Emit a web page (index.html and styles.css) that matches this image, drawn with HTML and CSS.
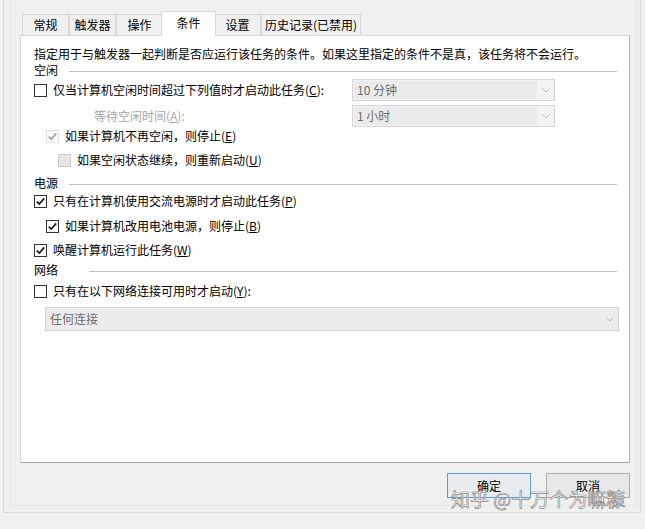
FILE: index.html
```html
<!DOCTYPE html>
<html lang="zh-CN">
<head>
  <meta charset="UTF-8" />
  <title>条件</title>
  <link rel="stylesheet" href="styles.css">
</head>
<body>

  <div class="frame">
    <div class="frame-inner">

      <div class="tabs">
        <div class="tab">常规</div>
        <div class="tab">触发器</div>
        <div class="tab">操作</div>
        <div class="tab active">条件</div>
        <div class="tab">设置</div>
        <div class="tab">历史记录(已禁用)</div>
      </div>

      <div class="panel">
        <p class="intro">指定用于与触发器一起判断是否应运行该任务的条件。如果这里指定的条件不是真，该任务将不会运行。</p>

        <!-- 空闲 -->
        <div class="group-title"><span>空闲</span><i class="rule"></i></div>
        <div class="field-row row-idle">
          <div class="field-label">
            <span class="box"></span>仅当计算机空闲时间超过下列值时才启动此任务(<u>C</u>):
          </div>
          <div class="combo">
            <span class="combo-text">10 分钟</span>
            <span class="combo-arrow"><svg width="8" height="5" viewBox="0 0 8 5"><path d="M0.5 0.5 L4 4 L7.5 0.5" fill="none" stroke="#bdbdbd" stroke-width="1"/></svg></span>
          </div>
        </div>
        <div class="field-row row-wait">
          <div class="field-label wait-label">等待空闲时间(<u>A</u>):</div>
          <div class="combo">
            <span class="combo-text">1 小时</span>
            <span class="combo-arrow"><svg width="8" height="5" viewBox="0 0 8 5"><path d="M0.5 0.5 L4 4 L7.5 0.5" fill="none" stroke="#bdbdbd" stroke-width="1"/></svg></span>
          </div>
        </div>
        <div class="opt sub row-stop">
          <span class="box disabled checked"><svg width="11" height="11" viewBox="0 0 11 11"><path d="M1.8 5.6 L4.3 8.1 L9.2 2.4" fill="none" stroke="#9c9c9c" stroke-width="1.6"/></svg></span>如果计算机不再空闲，则停止(<u>E</u>)
        </div>
        <div class="opt sub2 row-restart">
          <span class="box disabled"></span>如果空闲状态继续，则重新启动(<u>U</u>)
        </div>

        <!-- 电源 -->
        <div class="group-title title-power"><span>电源</span><i class="rule"></i></div>
        <div class="opt row-ac">
          <span class="box"><svg width="11" height="11" viewBox="0 0 11 11"><path d="M1.8 5.6 L4.3 8.1 L9.2 2.4" fill="none" stroke="#1a1a1a" stroke-width="1.7"/></svg></span>只有在计算机使用交流电源时才启动此任务(<u>P</u>)
        </div>
        <div class="opt sub row-battery">
          <span class="box"><svg width="11" height="11" viewBox="0 0 11 11"><path d="M1.8 5.6 L4.3 8.1 L9.2 2.4" fill="none" stroke="#1a1a1a" stroke-width="1.7"/></svg></span>如果计算机改用电池电源，则停止(<u>B</u>)
        </div>
        <div class="opt row-wake">
          <span class="box"><svg width="11" height="11" viewBox="0 0 11 11"><path d="M1.8 5.6 L4.3 8.1 L9.2 2.4" fill="none" stroke="#1a1a1a" stroke-width="1.7"/></svg></span>唤醒计算机运行此任务(<u>W</u>)
        </div>

        <!-- 网络 -->
        <div class="group-title title-net"><span>网络</span><i class="rule"></i></div>
        <div class="opt row-net">
          <span class="box"></span>只有在以下网络连接可用时才启动(<u>Y</u>):
        </div>
        <div class="combo combo-wide">
          <span class="combo-text">任何连接</span>
          <span class="combo-arrow"><svg width="8" height="5" viewBox="0 0 8 5"><path d="M0.5 0.5 L4 4 L7.5 0.5" fill="none" stroke="#bdbdbd" stroke-width="1"/></svg></span>
        </div>
      </div>

      <div class="buttons">
        <button class="btn default">确定</button>
        <button class="btn">取消</button>
      </div>

    </div>
  </div>

  <div class="watermark">知乎 @十万个为嘛糠</div>

</body>
</html>
```

FILE: styles.css
```css
body {
  margin: 0;
  background-color: #f0f0f0;
  font-family: "Noto Sans CJK SC", "Microsoft YaHei", sans-serif;
  font-size: 12px;
  color: #000;
  width: 645px;
  height: 529px;
  overflow: hidden;
  position: relative;
}
.frame {
  margin-left: 3px;
  width: 638px;
  height: 513px;
  box-sizing: border-box;
  border: 1px solid #dcdcdc;
  border-top: none;
  padding-left: 6px;
}
.frame-inner {
  width: 627px;
  height: 506px;
  box-sizing: border-box;
  border: 1px solid #e6e6e6;
  border-top: none;
  padding: 11px 0 0 9px;
}
.tabs {
  display: flex;
  align-items: flex-end;
  height: 25px;
  padding-left: 2px;
}
.tab {
  height: 22px;
  min-width: 47px;
  box-sizing: border-box;
  padding: 0 3px;
  border: 1px solid #d9d9d9;
  border-bottom: none;
  background-color: #f0f0f0;
  line-height: 20px;
  text-align: center;
  white-space: nowrap;
}
.tab.active {
  position: relative;
  z-index: 1;
  height: 25px;
  min-width: 55px;
  margin: 0 -2px;
  background-color: #fff;
  line-height: 21px;
}
.panel {
  position: relative;
  margin-top: -1px;
  width: 610px;
  height: 428px;
  box-sizing: border-box;
  background: #fff;
  border: 1px solid #d9d9d9;
  border-right-color: #b4b4b4;
  border-bottom-color: #a5a5a5;
  padding: 10px 12px 0 13px;
}
.intro {
  margin: 0;
  height: 16px;
  line-height: 16px;
  white-space: nowrap;
}
.group-title {
  display: flex;
  align-items: center;
  height: 16px;
  line-height: 16px;
}
.group-title .rule {
  flex: 1;
  height: 1px;
  margin-left: 11px;
  margin-top: 2px;
  background-color: #c2c2c2;
}
.title-net .rule {
  margin-left: 31px;
}
.box {
  display: inline-flex;
  align-items: center;
  justify-content: center;
  width: 13px;
  height: 13px;
  box-sizing: border-box;
  border: 1px solid #333;
  background: #fff;
  margin-right: 6px;
  flex-shrink: 0;
}
.box.disabled {
  border-color: #cccccc;
  background: #e6e6e6;
}
.box.disabled.checked {
  border-color: #e2e2e2;
  background: #fafafa;
}
.opt {
  display: flex;
  align-items: center;
  height: 16px;
  line-height: 16px;
  white-space: nowrap;
}
.opt.sub {
  padding-left: 12px;
}
.opt.sub2 {
  padding-left: 24px;
}
.field-row {
  display: flex;
  align-items: center;
  height: 22px;
}
.field-label {
  flex: 0 0 318px;
  display: flex;
  align-items: center;
  line-height: 16px;
  white-space: nowrap;
}
.wait-label {
  padding-left: 60px;
  box-sizing: border-box;
  color: #a6a6a6;
}
.combo {
  display: flex;
  width: 203px;
  height: 22px;
  box-sizing: border-box;
  border: 1px solid #d6d6d6;
  background: #f3f3f3;
  color: #6d6d6d;
}
.combo-text {
  flex: 1;
  padding-left: 3px;
  background: #ebebeb;
  margin: 1px 0 1px 1px;
  line-height: 18px;
}
.combo-arrow {
  width: 17px;
  display: flex;
  align-items: center;
  justify-content: center;
}
.combo-wide {
  width: 574px;
  height: 24px;
  margin-left: 11px;
  margin-top: 8px;
  background: #ececec;
}
.combo-wide .combo-text {
  line-height: 20px;
  margin: 1px 0 1px 1px;
  background: #ececec;
}
.row-idle { margin-top: 1px; }
.row-wait { margin-top: 4px; }
.row-stop { margin-top: 1px; }
.row-restart { margin-top: 8px; }
.title-power { margin-top: 7px; }
.row-ac { margin-top: 2px; }
.row-battery { margin-top: 9px; }
.row-wake { margin-top: 8px; }
.title-net { margin-top: 4px; }
.row-net { margin-top: 5px; }
.buttons {
  display: flex;
  justify-content: flex-end;
  gap: 15px;
  width: 610px;
  margin-top: 10px;
}
.btn {
  width: 84px;
  height: 25px;
  box-sizing: border-box;
  border: 1px solid #adadad;
  background-color: #e8e8e8;
  font-family: inherit;
  font-size: 12px;
  color: #000;
  padding: 0;
}
.btn.default {
  border-color: #5b9bd5;
  background-color: #e9ecee;
}
.watermark {
  position: absolute;
  left: 451px;
  top: 489px;
  font-size: 19px;
  line-height: 20px;
  color: #fff;
  -webkit-text-stroke: 0.7px #8c8c8c;
  white-space: nowrap;
}
```
